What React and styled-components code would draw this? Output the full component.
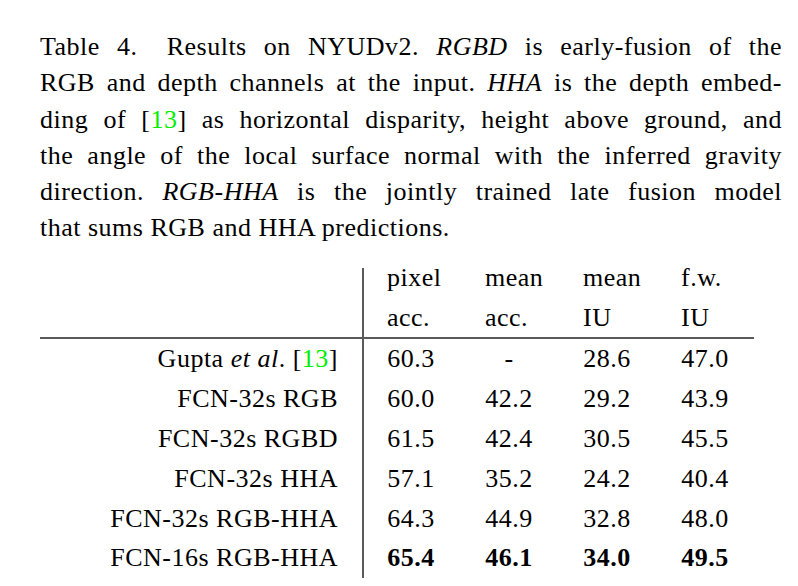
import styled, { createGlobalStyle } from "styled-components";

const Global = createGlobalStyle`
  html, body {
    margin: 0;
    padding: 0;
    background: #ffffff;
  }
`;

const Page = styled.div`
  width: 798px;
  height: 586px;
  padding: 29px 0 0 40px;
  box-sizing: border-box;
  overflow: hidden;
  font-family: "Liberation Serif", "Times New Roman", serif;
  color: #000;
`;

const Caption = styled.div`
  width: 742px;
  font-size: 26px;
  letter-spacing: 0.5px;
  line-height: 36.3px;
`;

const Line = styled.div`
  text-align: justify;
  text-align-last: ${(p) => (p.$last ? "left" : "justify")};
  white-space: nowrap;
`;

const Gap = styled.span`
  display: inline-block;
  width: ${(p) => p.$w}px;
`;

const Ref = styled.span`
  color: #00ee00;
`;

const Table = styled.div`
  margin-top: 11px;
  font-size: 26px;
  letter-spacing: 0.5px;
`;

const Head = styled.div`
  width: 714px;
  border-bottom: 2px solid #5a5a5a;
`;

const Row = styled.div`
  display: grid;
  grid-template-columns: 322px repeat(4, 98px);
  height: 39.8px;
  line-height: 39.8px;
  font-weight: ${(p) => (p.$bold ? "bold" : "normal")};
`;

const Label = styled.div`
  text-align: right;
  padding-right: 24px;
  font-weight: normal;
`;

const Cell = styled.div`
  text-align: ${(p) => (p.$head ? "left" : "center")};
  padding-left: ${(p) => (p.$head ? "25px" : "0")};
  background: ${(p) =>
    p.$first
      ? `linear-gradient(#5a5a5a, #5a5a5a) left ${p.$from || 0}px / 2px calc(100% - ${p.$from || 0}px) no-repeat`
      : "none"};
`;

const headers = [
  ["pixel", "mean", "mean", "f.w."],
  ["acc.", "acc.", "IU", "IU"],
];

const rows = [
  { label: "gupta", values: ["60.3", "-", "28.6", "47.0"] },
  { label: "FCN-32s RGB", values: ["60.0", "42.2", "29.2", "43.9"] },
  { label: "FCN-32s RGBD", values: ["61.5", "42.4", "30.5", "45.5"] },
  { label: "FCN-32s HHA", values: ["57.1", "35.2", "24.2", "40.4"] },
  { label: "FCN-32s RGB-HHA", values: ["64.3", "44.9", "32.8", "48.0"] },
  { label: "FCN-16s RGB-HHA", values: ["65.4", "46.1", "34.0", "49.5"], bold: true },
];

export default function App() {
  return (
    <Page>
      <Global />
      <Caption>
        <Line>
          Table 4.<Gap $w={12} /> Results on NYUDv2. <i>RGBD</i> is early-fusion of the
        </Line>
        <Line>
          RGB and depth channels at the input. <i>HHA</i> is the depth embed-
        </Line>
        <Line>
          ding of [<Ref>13</Ref>] as horizontal disparity, height above ground, and
        </Line>
        <Line>the angle of the local surface normal with the inferred gravity</Line>
        <Line>
          direction. <i>RGB-HHA</i> is the jointly trained late fusion model
        </Line>
        <Line $last>that sums RGB and HHA predictions.</Line>
      </Caption>
      <Table>
        <Head>
          {headers.map((h, i) => (
            <Row key={i}>
              <Label />
              {h.map((t, j) => (
                <Cell key={j} $head $first={j === 0} $from={i === 0 ? 10 : 0}>
                  {t}
                </Cell>
              ))}
            </Row>
          ))}
        </Head>
        {rows.map((r, i) => (
          <Row key={i} $bold={r.bold}>
            <Label>
              {r.label === "gupta" ? (
                <>
                  Gupta <i>et al</i>. [<Ref>13</Ref>]
                </>
              ) : (
                r.label
              )}
            </Label>
            {r.values.map((v, j) => (
              <Cell key={j} $first={j === 0}>
                {v}
              </Cell>
            ))}
          </Row>
        ))}
      </Table>
    </Page>
  );
}
